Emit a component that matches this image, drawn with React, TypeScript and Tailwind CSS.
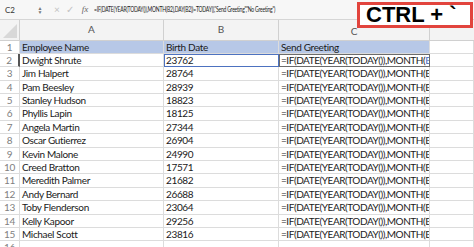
const rows: [string, string][] = [
  ['Dwight Shrute', '23762'],
  ['Jim Halpert', '28764'],
  ['Pam Beesley', '28939'],
  ['Stanley Hudson', '18823'],
  ['Phyllis Lapin', '18125'],
  ['Angela Martin', '27344'],
  ['Oscar Gutierrez', '26904'],
  ['Kevin Malone', '24990'],
  ['Creed Bratton', '17571'],
  ['Meredith Palmer', '21682'],
  ['Andy Bernard', '26688'],
  ['Toby Flenderson', '23064'],
  ['Kelly Kapoor', '29256'],
  ['Michael Scott', '23816'],
];

const cols = 'grid grid-cols-[20px_144px_115px_151px_1fr] h-[13.4px] text-[10px] tracking-[-0.35px]';
const cell = 'h-[13.4px] leading-[13.4px] border-r border-b border-[#dcdcdc] px-[2px] overflow-hidden whitespace-nowrap';
const font = { fontFamily: 'Lato, "Open Sans", sans-serif' };

function refNo(i: number) {
  const n = i + 2;
  return n >= 10 ? 'B1' : `B${n}`;
}

export default function App() {
  return (
    <div className="relative w-[474px] h-[247px] overflow-hidden bg-white text-[#1a1a1a]" style={font}>
      {/* formula bar */}
      <div className="flex items-center h-[20px] border-b border-[#d6d6d6] bg-[#f7f7f7] text-[8px]">
        <div className="w-[36px] pl-[5px] text-[#333]">C2</div>
        <div className="flex flex-col items-center text-[5px] leading-[4px] text-[#777] w-[8px]">
          <span>▲</span>
          <span>▼</span>
        </div>
        <span className="ml-[10px] text-[10px] text-[#c2c2c2]">×</span>
        <span className="ml-[6px] text-[10px] text-[#c2c2c2]">✓</span>
        <span className="ml-[8px] text-[9px] italic text-[#666]" style={{ fontFamily: '"Liberation Serif", serif' }}>fx</span>
        <span className="ml-[6px] inline-block origin-left scale-x-[0.72] text-[7px] tracking-[-0.3px] whitespace-nowrap text-[#222]">
          =IF(DATE(YEAR(TODAY()),MONTH(B2),DAY(B2))=TODAY(),"Send Greeting","No Greeting")
        </span>
      </div>

      {/* column headers */}
      <div className="grid grid-cols-[20px_144px_115px_151px_1fr] h-[20.5px] bg-[#f3f3f3] border-b border-[#d0d0d0] text-[10px] text-[#555]">
        <div className="relative border-r border-[#d0d0d0]">
          <div className="absolute right-[2px] bottom-[2px] w-0 h-0 border-l-[14px] border-l-transparent border-b-[14px] border-b-[#d8d8d8]" />
        </div>
        <div className="flex items-center justify-center border-r border-[#d0d0d0]">A</div>
        <div className="flex items-center justify-center border-r border-[#d0d0d0]">B</div>
        <div className="flex items-center justify-center border-r border-[#d0d0d0] pt-[4px]">C</div>
        <div />
      </div>

      {/* row 1 */}
      <div className={cols}>
        <div className={`${cell} text-center text-[#808080] bg-white`}>1</div>
        <div className={`${cell} bg-[#b7c8e7]`}>Employee Name</div>
        <div className={`${cell} bg-[#b7c8e7]`}>Birth Date</div>
        <div className={`${cell} bg-[#b7c8e7]`}>Send Greeting</div>
        <div className={cell} />
      </div>

      {rows.map(([name, date], i) => (
        <div key={name} className={cols}>
          <div className={`${cell} text-center text-[#808080] ${i === 0 ? 'border-r-2 border-r-[#555]' : ''}`}>{i + 2}</div>
          <div className={cell}>{name}</div>
          <div className={`${cell} ${i === 0 ? 'outline outline-1 outline-[#4d72c0] -outline-offset-1' : ''}`}>{date}</div>
          <div className={`${cell} tracking-[-0.45px] ${i === 0 ? 'outline outline-1 outline-[#6b6b6b] -outline-offset-1' : ''}`}>
            =IF(DATE(YEAR(TODAY()),MONTH(
            <span className={i === 0 ? 'text-[#3f68c0]' : ''}>{refNo(i)}</span>
          </div>
          <div className={cell} />
        </div>
      ))}

      <div className={cols}>
        <div className={`${cell} text-center text-[#808080]`}>16</div>
        <div className={cell} />
        <div className={cell} />
        <div className={cell} />
        <div className={cell} />
      </div>

      {/* keyboard shortcut callout */}
      <div className="absolute left-[357px] top-[2px] w-[116px] h-[26px] border-[3px] border-[#e2443d] bg-white flex items-center pl-[6px]">
        <span className="text-[22px] font-bold leading-none text-black whitespace-nowrap" style={{ fontFamily: '"Liberation Sans", Arial, sans-serif' }}>
          CTRL + `
        </span>
      </div>
    </div>
  );
}
